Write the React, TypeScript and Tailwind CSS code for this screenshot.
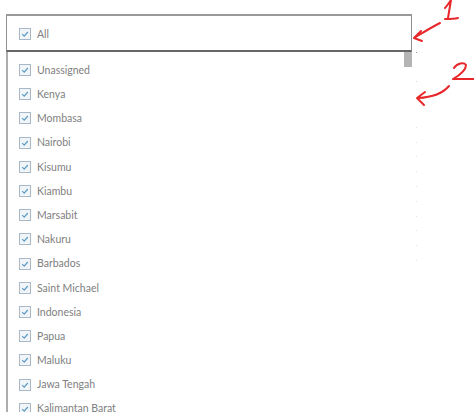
const regions = [
  "Unassigned",
  "Kenya",
  "Mombasa",
  "Nairobi",
  "Kisumu",
  "Kiambu",
  "Marsabit",
  "Nakuru",
  "Barbados",
  "Saint Michael",
  "Indonesia",
  "Papua",
  "Maluku",
  "Jawa Tengah",
  "Kalimantan Barat",
];

const specks = [127, 142, 156, 171, 186, 201, 216, 230, 245, 260];

function CheckRow({ label, className }: { label: string; className: string }) {
  return (
    <div className={`flex items-center gap-[6px] ${className}`}>
      <span className="flex h-[12px] w-[12px] shrink-0 items-center justify-center border border-[#a9b8c8] bg-[#f1f5f8]">
        <svg width="10" height="10" viewBox="0 0 10 10" fill="none">
          <path d="M2.2 5.2 L4.2 7.2 L7.8 3" stroke="#5a9cc8" strokeWidth="1.2" />
        </svg>
      </span>
      <span className="text-[10.5px] leading-none text-[#808080]">{label}</span>
    </div>
  );
}

export default function App() {
  return (
    <div className="relative h-[412px] w-[474px] overflow-hidden bg-white font-['Lato','Liberation_Sans',sans-serif]">
      <div className="pl-[6px] pt-[14px]">
        <div className="flex h-[38px] w-[406px] items-center border-x border-t-2 border-b-2 border-x-[#8f8f8f] border-t-[#9a9a9a] border-b-[#666666] pl-[12px] pt-[2px]">
          <CheckRow label="All" className="" />
        </div>
        <div className="flex w-[406px]">
          <div className="flex-1 border-l-2 border-[#adadad] pl-[11px] pt-[6px]">
            {regions.map((region) => (
              <CheckRow key={region} label={region} className="h-[24.2px]" />
            ))}
          </div>
          <div className="h-[15px] w-[8px] bg-[#b4b4b4]" />
        </div>
      </div>

      {/* faint specks right of the list */}
      <svg className="absolute left-0 top-0" width="474" height="412">
        <rect x="416" y="52" width="1" height="1" fill="#9a9a9a" />
        <rect x="416" y="81" width="1" height="1" fill="#d8d8d8" />
        {specks.map((y) => (
          <rect key={y} x="416" y={y} width="1" height="1" fill="#e2e2e2" />
        ))}
      </svg>

      {/* red pen annotations */}
      <svg className="absolute left-0 top-0" width="474" height="412" fill="none" stroke="#e8272b" strokeWidth="2" strokeLinecap="round" strokeLinejoin="round">
        <path d="M445 8 C447 6 449 3 451 0 C450 6 449 12 448 18 M445 19 C449 19 454 19 458 18" />
        <path d="M440 23 C432 27 424 32 414 38 M421 31 L414 38 L422 41" />
        <path d="M454 68 C457 63 464 62 466 65 C466 70 460 75 453 79 C460 79 468 79 474 79" />
        <path d="M449 86 C444 92 436 97 418 98 M425 92 L417 98 L424 105" />
      </svg>
    </div>
  );
}
